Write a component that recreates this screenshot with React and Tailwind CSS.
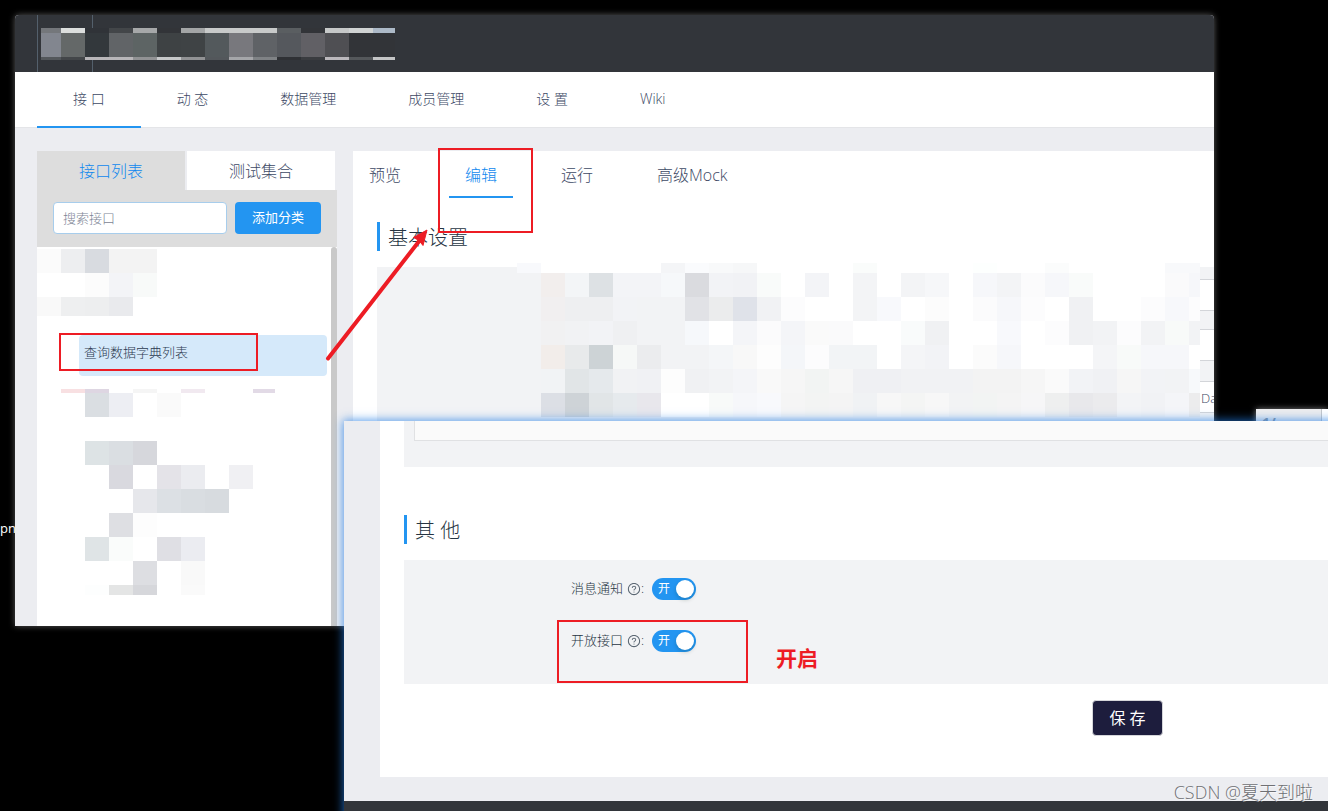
import React, { useState } from "react";
import { AiOutlineQuestionCircle } from "react-icons/ai";

const NAV = ["接 口", "动 态", "数据管理", "成员管理", "设 置", "Wiki"];
const TABS = ["预览", "编辑", "运行", "高级Mock"];

// each row: [y, height, colours by column], "-" leaves the cell empty
const TITLE_MOSAIC = [
  [0, 5, "74777b dcdedd 303338 434649 a6a8a9 323438 a3a5a6 c8caca c8caca c8caca 5a5e61 323438 c6c8c8 d0d3d3 acb9c7"],
  [5, 24, "82868f 646868 33383c 616467 5d6464 3e4244 3f4345 53595c 78787d 5f6266 55585d 616065 4f4f53 323438 323438"],
  [29, 3, "53575b 434649 b8b6b9 b8b6b9 919294 c6c8c9 919294 53575b a5a6a9 7f8285 2f3135 3a3c40 bbb8bc 55585b c4c5c6"],
];

const LIST_TOP_MOSAIC = [
  [0, 24, "fbfbfb edeef0 d8dbe0 f3f3f3 f3f3f3"],
  [24, 24, "- - fcfcfc f3f4f7 f8faf9"],
  [48, 19, "f9f9f9 eeeff0 edeeef e9eaed"],
];

const LIST_MOSAIC = [
  [0, 4, "f8e0e2 ded6e2 - f5f5f5 - f1e9f0 - - e2dae6"],
  [4, 24, "- dadee2 edeef3 - fafafa"],
  [52, 24, "- dde3e5 dadee2 d6d7dc"],
  [76, 24, "- - d9d9df - e4e3e8 ebecf0 - f0f0f3"],
  [100, 24, "- - - e6e7eb dce0e4 d9dde1 d7dbdf"],
  [124, 24, "- - dedfe3 fdfdfd"],
  [148, 24, "- dfe4e6 fafcfb - dfdfe4 ebecf1"],
  [172, 24, "- - - dddee2 - f9f9f9"],
  [196, 10, "- fdfefe e4e5e5 d6d7db - fafafa"],
];

const FORM_MOSAIC = [
  [0, 10, "f8f9fc ffffff ffffff ffffff ffffff ffffff f4f5f7 fafbfd f8f9fa f6f7f8 ffffff ffffff ffffff ffffff fafcfb ffffff ffffff ffffff ffffff fdfffe ffffff ffffff fbfcfc ffffff ffffff ffffff ffffff f8f9fb f8f9fb"],
  [10, 24, "f2f3f5 f2eeed f3f5f7 dde1e4 f3f4f7 f3f4f7 f6f8fa dadbdf f2f3f6 f1f2f5 f9fbfa ffffff f3f4f7 ffffff f3f4f6 ffffff f3f4f6 f6f7f9 ffffff f6f7fa f3f4f6 fbfbfc f6f7fa f9fbfa ffffff ffffff ffffff fafafb f6f7fa"],
  [34, 24, "f2f3f5 f1eff0 eeeff1 eeeff1 f2f3f6 f2f3f5 f2f3f5 e1e2e6 ebeced dfe2e9 f1f2f4 fcfcfd ffffff ffffff f3f4f6 f8f9fc ffffff fcfcfc ffffff fbfbfc f6f7fa fcfcfd ffffff f0f1f3 ffffff ffffff fcfcfd f7f8fb fcfcfd"],
  [58, 24, "f2f3f5 f1f1f2 f1f2f4 f2f3f6 eff0f2 f2f3f5 f2f3f5 f6f8fb ffffff f4f5f8 fbfbfc f4f5f8 fafafa fafafb ffffff ffffff f9fbfb f0f1f3 ffffff ffffff f8f9fc ffffff fcfcfd f0f1f3 f2f3f5 fcfcfd f2f3f5 f8faf9 f2f3f5"],
  [82, 24, "f2f3f5 f2edea e8eaeb cdd3d6 f6f8f7 ebecee f2f3f5 f2f3f5 f4f6f8 f8f8f8 fdfdfd f4f6f9 fcfcfd f2f4f6 f2f4f6 ffffff f4f5f7 f2f3f6 ffffff fbfbfb f6f7fa ffffff ffffff ffffff f4f5f7 f8faf9 f6f7fa f6f7fa ffffff"],
  [106, 24, "f2f3f5 f1f3f5 e1e5e7 e5e9ec f1f2f4 f0f1f4 fdfdfd f0f1f3 f2f3f5 f4f5f8 f9f9f9 f6f6f6 f2f4f3 f6f6f6 eff0f3 eff0f3 f1f2f4 f1f2f4 f1f2f4 f3f3f3 f3f3f3 f6f6f6 fafafa f2f3f6 f0f1f4 f6f6f6 f2f3f6 f2f3f5 f7f9fb"],
  [130, 24, "f2f3f5 dcdfe5 ced3d7 e1e5e7 e6eaed e8e7ec ffffff ffffff f8faf9 f6f7fa f8f9fc f5f5f5 f3f4f3 f4f4f4 f0f2f4 f7f7f7 f4f5f4 f7f7f7 f2f3f4 f2f4f3 f4f4f4 f6f6f7 eeefef e8e8eb ebebed f3f4f6 f1f2f5 f4f5f8 ececed"],
];

function Mosaic({ rows, width, height, shift = 0, className }) {
  return (
    <svg width={width} height={height} shapeRendering="crispEdges" className={className} aria-hidden="true">
      {rows.map(([y, h, cells]) =>
        cells.split(" ").map((c, i) =>
          c === "-" ? null : <rect key={`${y}-${i}`} x={i * 24 - shift} y={y} width="24" height={h} fill={`#${c}`} />
        )
      )}
    </svg>
  );
}

function SectionTitle({ children }) {
  return <h2 className="h-[29px] border-l-[3px] border-[#2395f1] pl-2 text-xl leading-[31px] font-light text-[#263442]">{children}</h2>;
}

function Switch({ id, label }) {
  const [on, setOn] = useState(true);
  return (
    <div className="flex h-[22px] items-center">
      <label htmlFor={id} className="flex w-60 items-center justify-end text-[13px] font-light text-[#263442]">
        {label}
        <AiOutlineQuestionCircle className="ml-1 size-[14px] text-[#5a6672]" />:
      </label>
      <div className="relative ml-2 h-[22px] w-11">
        <input
          id={id}
          type="checkbox"
          role="switch"
          checked={on}
          onChange={() => setOn(!on)}
          className="block h-[22px] w-11 cursor-pointer appearance-none rounded-full bg-[#bfbfbf] checked:bg-[#2395f1]"
        />
        <span className={`pointer-events-none absolute inset-y-0 flex items-center text-xs text-white ${on ? "left-1.5" : "right-1.5"}`}>
          {on ? "开" : "关"}
        </span>
        <span className={`pointer-events-none absolute top-0.5 size-[18px] rounded-full bg-white shadow-[0_2px_4px_rgba(0,35,11,0.2)] ${on ? "right-0.5" : "left-0.5"}`} />
      </div>
    </div>
  );
}

function Sidebar() {
  return (
    <aside className="flex w-[300px] shrink-0 flex-col">
      <div className="flex gap-0.5 pr-0.5">
        <button className="h-[39px] flex-1 bg-[#ddd] text-base font-light text-[#1088ee]">接口列表</button>
        <button className="h-[39px] flex-1 bg-white text-base font-light text-[#3d4965]">测试集合</button>
      </div>
      <div className="flex gap-2 bg-[#ddd] px-4 pt-3 pb-[13px]">
        <input
          type="text"
          aria-label="搜索接口"
          placeholder="搜索接口"
          className="h-8 min-w-0 flex-1 rounded border border-[#a7cdec] bg-white px-[9px] text-[13px] font-light placeholder:text-[#7c8494]"
        />
        <button className="h-8 w-[86px] rounded bg-[#2395f1] text-[13px] text-white">添加分类</button>
      </div>
      <div className="flex flex-1 bg-white">
        <div className="flex-1 pt-0.5">
          <Mosaic rows={LIST_TOP_MOSAIC} width="120" height="67" className="block" />
          <a href="#dict" className="mt-[19px] mr-1 ml-[42px] block h-[41px] rounded-sm bg-[#d5e9fa] pl-[5px] text-[13px] leading-[34px] font-light text-[#2b3950]">
            查询数据字典列表
          </a>
          <Mosaic rows={LIST_MOSAIC} width="214" height="206" className="mt-[13px] ml-6 block" />
        </div>
        <div className="w-1.5 rounded-t-full bg-[#c9c9c9]" />
      </div>
    </aside>
  );
}

function EditorWindow() {
  return (
    <div className="absolute top-[15px] right-[114px] left-[15px] flex h-[611px] flex-col overflow-hidden rounded-t bg-[#ecedf1] shadow-[0_0_6px_rgba(255,255,255,0.35)]">
      <header className="flex h-[57px] shrink-0 bg-[#32353a] pl-[22px]">
        <div className="w-14 shrink-0 border-x border-[#54606c]" />
        <Mosaic rows={TITLE_MOSAIC} width="354" height="32" shift={4} className="-ml-[52px] mt-[13px] bg-[#32353a]" />
      </header>
      <nav className="flex h-[56px] shrink-0 border-b border-[#e4e5e8] bg-white pl-[22px]">
        {NAV.map((item, i) => (
          <a
            key={item}
            href="#nav"
            className={`h-[56px] px-9 text-sm leading-[54px] font-light whitespace-pre text-[#3d4965] ${i === 0 ? "border-b-2 border-[#2395f1]" : ""}`}
          >
            {item}
          </a>
        ))}
      </nav>
      <div className="flex min-h-0 flex-1 gap-4 pt-[23px] pl-[22px]">
        <Sidebar />
        <main className="flex min-w-0 flex-1 flex-col bg-white">
          <div className="flex gap-8">
            {TABS.map((tab, i) => (
              <button
                key={tab}
                className={`h-[47px] border-b-2 px-4 pt-0.5 text-base font-light ${i === 1 ? "border-[#2395f1] text-[#1088ee]" : "border-transparent text-[#3d4965]"}`}
              >
                {tab}
              </button>
            ))}
          </div>
          <div className="flex flex-1 flex-col pt-6 pl-6">
            <SectionTitle>基本设置</SectionTitle>
            <div className="relative mt-4 flex flex-1 justify-end bg-[#f2f3f5]">
              <Mosaic rows={FORM_MOSAIC} width="683" height="154" className="absolute -top-1 left-[140px]" />
              <div className="flex w-[14px] flex-col gap-[18px] overflow-hidden pt-3 text-[13px] font-light text-[#3d4965]">
                <div className="h-8 shrink-0 border-y border-[#d3d5d9] bg-white" />
                <div className="h-8 shrink-0 border-y border-[#d3d5d9] bg-white" />
                <div className="mt-0.5 h-8 shrink-0 border-y border-[#d3d5d9] bg-white pl-px leading-8">Da</div>
              </div>
            </div>
          </div>
        </main>
      </div>
    </div>
  );
}

function SettingsWindow() {
  return (
    <div className="absolute top-[421px] right-0 bottom-0 left-[344px] flex flex-col overflow-hidden bg-[#ecedf1] pl-9">
      <div className="shrink-0 bg-white pb-[41px] pl-6">
        <div className="bg-[#f2f3f5] pb-[26px] pl-2.5">
          <div className="h-5 border-b border-l border-[#e0e1e3] bg-[#fafafa]" />
        </div>
        <div className="mt-12">
          <SectionTitle>其 他</SectionTitle>
        </div>
        <div className="mt-4 flex h-[124px] flex-col gap-[30px] bg-[#f2f3f5] pt-[18px]">
          <Switch id="notice" label="消息通知" />
          <Switch id="open" label="开放接口" />
        </div>
        <div className="mt-4 flex justify-end pr-[165px]">
          <button className="h-9 w-[71px] rounded border border-[#d5d6da] bg-[#1d1d3d] text-base whitespace-pre text-white">保 存</button>
        </div>
      </div>
      <footer className="mt-6 -ml-9 flex-1 bg-[#32353a]" />
    </div>
  );
}

function Annotations() {
  return (
    <div className="pointer-events-none absolute inset-0">
      <div className="absolute top-[148px] left-[438px] h-[85px] w-[95px] border-2 border-[#ed1c24]" />
      <div className="absolute top-[333px] left-[59px] h-[38px] w-[199px] border-2 border-[#ed1c24]" />
      <div className="absolute top-[620px] left-[557px] h-[63px] w-[191px] border-2 border-[#ed1c24]" />
      <svg width="110" height="140" className="absolute top-[225px] left-[322px]" fill="#ed1c24" aria-hidden="true">
        <path d="M6 133.500 98 15" stroke="#ed1c24" strokeWidth="4" strokeLinecap="round" />
        <path d="M105 5 91.500 12.500 97 15.500 101 20.500Z" stroke="#ed1c24" strokeLinejoin="round" />
      </svg>
      <strong className="absolute top-[643px] left-[776px] text-[21px] leading-[30px] text-[#ed1c24]">开启</strong>
      <span className="absolute right-[15px] bottom-[5px] text-lg leading-7 font-light text-[#6f7074] [text-shadow:1px_1px_0_rgba(255,255,255,0.6)]">
        CSDN @夏天到啦
      </span>
    </div>
  );
}

export default function App() {
  return (
    <div className="relative h-screen overflow-hidden bg-black font-['Open_Sans','Noto_Sans_CJK_SC',sans-serif]">
      <span className="absolute top-[518px] left-0 text-[13px] leading-5 text-white">pn</span>
      <EditorWindow />
      <div className="absolute top-[409px] right-0 flex h-8 w-[72px] bg-white shadow-[0_0_6px_rgba(255,255,255,0.5)]">
        <div className="w-[66px] border-r border-[#c5c7ca] bg-[#ededee] pt-1 pl-1.5 text-sm leading-5 font-bold text-[#8d97a3]">1/</div>
      </div>
      <div className="absolute top-[421px] -right-4 -bottom-4 left-[344px] shadow-[0_0_9px_1px_rgba(35,125,230,0.75)]" />
      <SettingsWindow />
      <Annotations />
    </div>
  );
}
